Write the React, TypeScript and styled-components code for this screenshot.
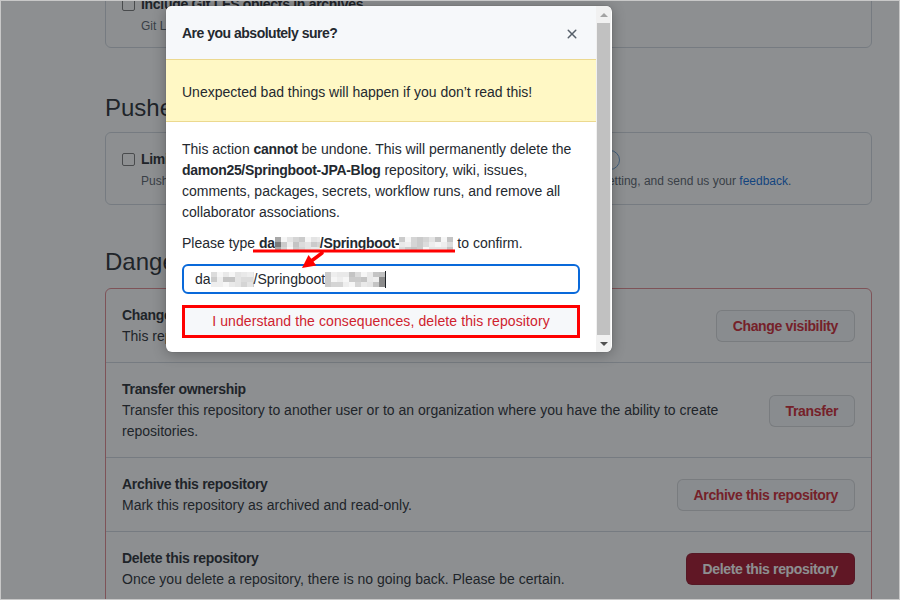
import React from "react";
import styled, { createGlobalStyle } from "styled-components";

const GlobalStyle = createGlobalStyle`
  *, *::before, *::after { box-sizing: border-box; }
  html, body { margin: 0; padding: 0; background: #ffffff; }
  body {
    font-family: "Liberation Sans", Arial, sans-serif;
    font-size: 14px;
    line-height: 1.5;
    color: #24292f;
  }
`;

const Frame = styled.div`
  position: relative;
  width: 900px;
  height: 600px;
  overflow: hidden;
  border: 1px solid #c8c8c8;
  background: #ffffff;
`;

const Page = styled.main`
  width: 767px;
  margin: -24px 0 0 104px;
`;

const Box = styled.section<{ $danger?: boolean }>`
  border: 1px solid ${(p) => (p.$danger ? "#e0868d" : "#d0d7de")};
  border-radius: 6px;
`;

const Heading = styled.h2<{ $top: number; $bottom: number }>`
  margin: ${(p) => p.$top}px 0 ${(p) => p.$bottom}px;
  font-size: 24px;
  line-height: 36px;
  font-weight: 400;
  color: #24292f;
`;

const CheckRow = styled.div<{ $bottom: number }>`
  padding: 16px 16px ${(p) => p.$bottom}px;
`;

const CheckLine = styled.div`
  display: flex;
  align-items: center;
  gap: 6px;
  line-height: 21px;
`;

const Checkbox = styled.span`
  flex: none;
  width: 13px;
  height: 13px;
  border: 1px solid #767676;
  border-radius: 2px;
  background: #ffffff;
`;

const Strong = styled.strong`
  font-weight: 700;
  letter-spacing: -0.3px;
`;

const InfoCircle = styled.span`
  flex: none;
  width: 20px;
  height: 20px;
  margin-left: 23px;
  border: 1.5px solid #6a9fd6;
  border-radius: 50%;
`;

const Note = styled.p`
  margin: 2px 0 0;
  padding-left: 19px;
  font-size: 12px;
  line-height: 18px;
  color: #57606a;
`;

const Link = styled.a`
  color: #0969da;
  text-decoration: none;
`;

const DangerRow = styled.div<{ $first?: boolean }>`
  display: flex;
  align-items: center;
  justify-content: space-between;
  gap: 16px;
  padding: 16px 16px 15px;
  border-top: ${(p) => (p.$first ? "0" : "1px solid #d0d7de")};
`;

const RowText = styled.div`
  flex: 1 1 auto;
  line-height: 21px;
`;

const RowTitle = styled.div`
  font-weight: 700;
  letter-spacing: -0.3px;
`;

const RowDesc = styled.div``;

const ActionButton = styled.button<{ $filled?: boolean }>`
  flex: none;
  height: 32px;
  padding: 0 16px;
  border-radius: 6px;
  border: 1px solid rgba(31, 35, 40, 0.15);
  background: ${(p) => (p.$filled ? "#a40e26" : "#f6f8fa")};
  color: ${(p) => (p.$filled ? "#ffffff" : "#cf222e")};
  font-family: inherit;
  font-size: 14px;
  font-weight: 700;
  letter-spacing: -0.35px;
  white-space: nowrap;
`;

const Overlay = styled.div`
  position: absolute;
  inset: 0;
  background: rgba(27, 31, 36, 0.5);
`;

const Dialog = styled.div`
  position: absolute;
  left: 165px;
  top: 5px;
  width: 446px;
  height: 346px;
  display: flex;
  background: #ffffff;
  border-radius: 6px;
  overflow: hidden;
  box-shadow: 0 0 0 1px rgba(0, 0, 0, 0.04), 0 2px 14px rgba(0, 0, 0, 0.3);
`;

const DialogMain = styled.div`
  width: 430px;
  display: flex;
  flex-direction: column;
`;

const DialogHeader = styled.header`
  height: 53px;
  flex: none;
  display: flex;
  align-items: center;
  justify-content: space-between;
  padding: 2px 16px 0;
  background: #f6f8fa;
`;

const DialogTitle = styled.h1`
  margin: 0;
  font-size: 14px;
  font-weight: 700;
  letter-spacing: -0.5px;
  color: #24292f;
`;

const CloseButton = styled.button`
  width: 32px;
  height: 32px;
  margin-right: -8px;
  padding: 0;
  display: grid;
  place-items: center;
  border: 0;
  background: transparent;
  color: #57606a;
`;

const Flash = styled.div`
  padding: 22px 16px 18px;
  background: #fff8c5;
  border-top: 1px solid #ecd98f;
  border-bottom: 1px solid #ecd98f;
  line-height: 21px;
`;

const DialogBody = styled.div`
  position: relative;
  padding: 17px 16px 16px;
`;

const Para = styled.p`
  margin: 0 0 10px;
  line-height: 21px;
`;

const FakeInput = styled.div`
  height: 30px;
  margin-top: 9px;
  padding: 0 11px;
  display: flex;
  align-items: center;
  border: 2px solid #0969da;
  border-radius: 6px;
  background: #ffffff;
  color: #24292f;
  white-space: nowrap;
`;

const Caret = styled.span`
  display: inline-block;
  width: 1px;
  height: 17px;
  background: #1f2328;
`;

const ConfirmButton = styled.button`
  width: 100%;
  height: 33px;
  margin-top: 11px;
  padding: 0 0 1px;
  border: 3px solid #ff0000;
  background: #f6f8fa;
  color: #cf222e;
  font-family: inherit;
  font-size: 14px;
  font-weight: 400;
  letter-spacing: 0.1px;
`;

const Annotation = styled.svg`
  position: absolute;
  left: 0;
  top: 0;
  pointer-events: none;
`;

const Scrollbar = styled.div`
  width: 15px;
  margin-right: 1px;
  display: flex;
  flex-direction: column;
  background: #f1f1f1;
`;

const ScrollArrow = styled.div<{ $dir: "up" | "down" }>`
  height: 17px;
  flex: none;
  display: grid;
  place-items: center;
  &::after {
    content: "";
    width: 0;
    height: 0;
    border-left: 4px solid transparent;
    border-right: 4px solid transparent;
    ${(p) =>
      p.$dir === "up"
        ? "border-bottom: 4px solid #a3a3a3;"
        : "border-top: 4px solid #505050;"}
  }
`;

const ScrollThumb = styled.div`
  flex: 1;
  margin: 0 1px;
  background: #c1c1c1;
`;

const MosaicSvg = styled.svg<{ $shift: number }>`
  display: inline-block;
  vertical-align: ${(p) => p.$shift}px;
`;

const PALETTE = ["#e4e4e4", "#d5d5d5", "#eeeeee", "#cbcbcb", "#f6f6f6", "#dcdcdc", "#c4c4c4", "#e9e9e9"];

function Mosaic({
  width,
  height,
  seed,
  shift = -2,
  darkStart,
  darkEnd,
}: {
  width: number;
  height: number;
  seed: number;
  shift?: number;
  darkStart?: boolean;
  darkEnd?: boolean;
}) {
  const cw = 6;
  const ch = 5;
  const cols = Math.ceil(width / cw);
  const rows = Math.ceil(height / ch);
  let s = seed;
  const rand = () => {
    s = (s * 9301 + 49297) % 233280;
    return s / 233280;
  };
  const cells: React.ReactNode[] = [];
  for (let r = 0; r < rows; r++) {
    for (let c = 0; c < cols; c++) {
      let fill = PALETTE[Math.floor(rand() * PALETTE.length)];
      if (darkStart && c === 0) fill = r === 1 ? "#7a7a7a" : "#a8a8a8";
      if (darkEnd && c === cols - 1) fill = r === 0 ? "#c0c0c0" : "#8c8c8c";
      cells.push(<rect key={`${r}-${c}`} x={c * cw} y={r * ch} width={cw} height={ch} fill={fill} />);
    }
  }
  return (
    <MosaicSvg $shift={shift} width={width} height={height} viewBox={`0 0 ${width} ${height}`}>
      {cells}
    </MosaicSvg>
  );
}

const dangerRows = [
  { title: "Change visibility", desc: "This repository is currently public.", button: "Change visibility" },
  {
    title: "Transfer ownership",
    desc: "Transfer this repository to another user or to an organization where you have the ability to create repositories.",
    button: "Transfer",
  },
  { title: "Archive this repository", desc: "Mark this repository as archived and read-only.", button: "Archive this repository" },
  {
    title: "Delete this repository",
    desc: "Once you delete a repository, there is no going back. Please be certain.",
    button: "Delete this repository",
    filled: true,
  },
];

export default function App() {
  return (
    <>
      <GlobalStyle />
      <Frame>
        <Page>
          <Box>
            <CheckRow $bottom={12}>
              <CheckLine>
                <Checkbox />
                <Strong>Include Git LFS objects in archives</Strong>
              </CheckLine>
              <Note>Git LFS objects will be included in archive downloads.</Note>
            </CheckRow>
          </Box>

          <Heading $top={42} $bottom={6}>Pushes</Heading>
          <Box>
            <CheckRow $bottom={14}>
              <CheckLine>
                <Checkbox />
                <Strong>Limit how many branches and tags can be updated in a single push</Strong>
                <InfoCircle aria-hidden="true" />
              </CheckLine>
              <Note>
                Pushes will be rejected if they attempt to update more than this. Learn more about this setting, and
                send us your <Link href="#">feedback</Link>.
              </Note>
            </CheckRow>
          </Box>

          <Heading $top={39} $bottom={8}>Danger Zone</Heading>
          <Box $danger>
            {dangerRows.map((row, i) => (
              <DangerRow key={row.title} $first={i === 0}>
                <RowText>
                  <RowTitle>{row.title}</RowTitle>
                  <RowDesc>{row.desc}</RowDesc>
                </RowText>
                <ActionButton $filled={row.filled}>{row.button}</ActionButton>
              </DangerRow>
            ))}
          </Box>
        </Page>

        <Overlay />

        <Dialog role="dialog" aria-label="Are you absolutely sure?">
          <DialogMain>
            <DialogHeader>
              <DialogTitle>Are you absolutely sure?</DialogTitle>
              <CloseButton aria-label="Close dialog">
                <svg width="16" height="16" viewBox="0 0 16 16" fill="currentColor">
                  <path d="M3.72 3.72a.75.75 0 0 1 1.06 0L8 6.94l3.22-3.22a.749.749 0 0 1 1.275.326.749.749 0 0 1-.215.734L9.06 8l3.22 3.22a.749.749 0 0 1-.326 1.275.749.749 0 0 1-.734-.215L8 9.06l-3.22 3.22a.751.751 0 0 1-1.042-.018.751.751 0 0 1-.018-1.042L6.94 8 3.72 4.78a.75.75 0 0 1 0-1.06Z" />
                </svg>
              </CloseButton>
            </DialogHeader>
            <Flash>Unexpected bad things will happen if you don’t read this!</Flash>
            <DialogBody>
              <Para>
                This action <Strong>cannot</Strong> be undone. This will permanently delete the
                <br />
                <Strong>damon25/Springboot-JPA-Blog</Strong> repository, wiki, issues,
                <br />
                comments, packages, secrets, workflow runs, and remove all
                <br />
                collaborator associations.
              </Para>
              <Para>
                Please type{" "}
                <Strong>
                  da
                  <Mosaic width={45} height={13} seed={7} darkStart />
                  /Springboot-
                  <Mosaic width={54} height={13} seed={31} />
                </Strong>{" "}
                to confirm.
              </Para>
              <FakeInput>
                da
                <Mosaic width={43} height={15} seed={13} shift={-3} />
                /Springboot
                <Mosaic width={60} height={15} seed={57} shift={-3} darkEnd />
                <Caret />
              </FakeInput>
              <ConfirmButton>I understand the consequences, delete this repository</ConfirmButton>
              <Annotation width="430" height="230" viewBox="0 0 430 230">
                <line x1="87" y1="129" x2="289" y2="129" stroke="#ff0000" strokeWidth="3" />
                <line x1="156" y1="131" x2="146" y2="138.5" stroke="#ff0000" strokeWidth="3.5" strokeLinecap="round" />
                <polygon points="136,146 150.3,143.4 142.5,133" fill="#ff0000" />
              </Annotation>
            </DialogBody>
          </DialogMain>
          <Scrollbar>
            <ScrollArrow $dir="up" />
            <ScrollThumb />
            <ScrollArrow $dir="down" />
          </Scrollbar>
        </Dialog>
      </Frame>
    </>
  );
}
